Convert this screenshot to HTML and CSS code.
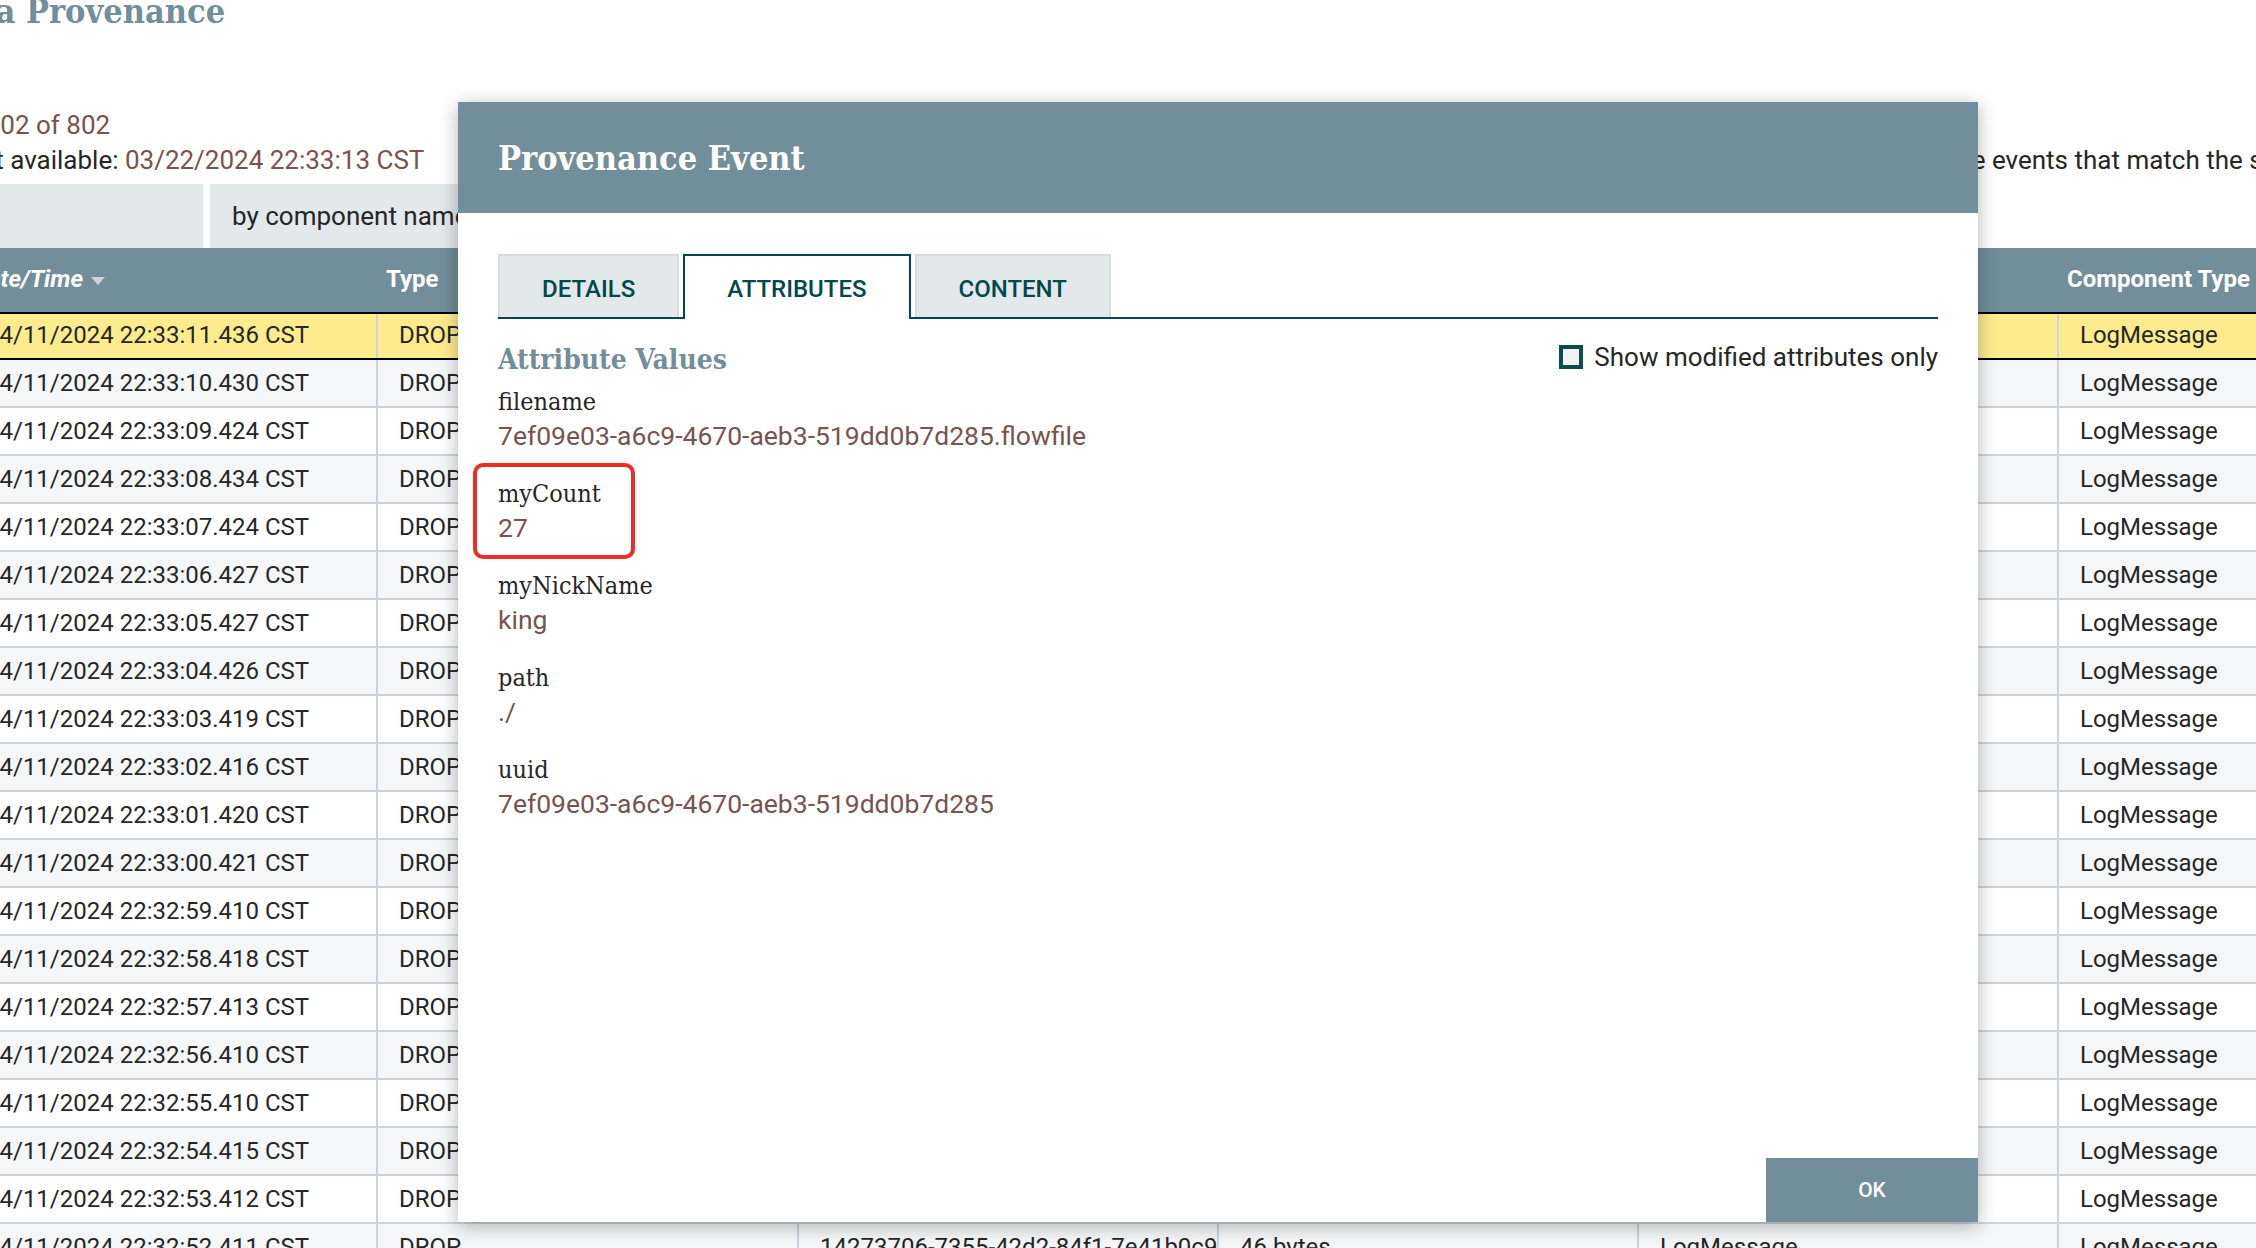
FILE: index.html
```html
<!DOCTYPE html>
<html lang="en">
<head>
    <meta charset="UTF-8">
    <meta name="viewport" content="width=device-width, initial-scale=1.0">
    <title>Data Provenance</title>
    <link rel="stylesheet" href="styles.css">
</head>
<body>
    <div class="provenance-page">
        <h1 class="page-title">Data Provenance</h1>

        <div class="summary">
            <div class="summary-left">
                <div class="value">Displaying 802 of 802</div>
                <div>Oldest event available: <span class="value">03/22/2024 22:33:13 CST</span></div>
            </div>
            <div class="summary-note">Showing the events that match the search criteria.</div>
        </div>

        <div class="search-bar">
            <div class="search-box"></div>
            <div class="search-box filter">by component name</div>
        </div>

        <div class="grid">
            <div class="grid-header">
                <div class="col col-date sorted">Date/Time
                    <svg class="sort-arrow" width="14" height="8" viewBox="0 0 14 8"><path d="M0 0h14L7 8z"/></svg>
                </div>
                <div class="col col-type">Type</div>
                <div class="col">FlowFile Uuid</div>
                <div class="col">Size</div>
                <div class="col">Component Name</div>
                <div class="col col-comp">Component Type</div>
            </div>

            <div class="grid-body">
                <div class="grid-row selected">
                    <div class="col col-date">04/11/2024 22:33:11.436 CST</div>
                    <div class="col col-type">DROP</div>
                    <div class="col">7ef09e03-a6c9-4670-aeb3-519dd0b7d285</div>
                    <div class="col">46 bytes</div>
                    <div class="col">LogMessage</div>
                    <div class="col col-comp">LogMessage</div>
                </div>
                <div class="grid-row">
                    <div class="col col-date">04/11/2024 22:33:10.430 CST</div>
                    <div class="col col-type">DROP</div>
                    <div class="col">c1a52e07-9d1b-4f62-b0a4-2e8c71d5f903</div>
                    <div class="col">46 bytes</div>
                    <div class="col">LogMessage</div>
                    <div class="col col-comp">LogMessage</div>
                </div>
                <div class="grid-row">
                    <div class="col col-date">04/11/2024 22:33:09.424 CST</div>
                    <div class="col col-type">DROP</div>
                    <div class="col">5b83f2d4-0e77-41c9-9a36-d40f1e6b8a25</div>
                    <div class="col">46 bytes</div>
                    <div class="col">LogMessage</div>
                    <div class="col col-comp">LogMessage</div>
                </div>
                <div class="grid-row">
                    <div class="col col-date">04/11/2024 22:33:08.434 CST</div>
                    <div class="col col-type">DROP</div>
                    <div class="col">e2d9a4b1-6c30-4f85-8e1b-73a9c05d2f64</div>
                    <div class="col">46 bytes</div>
                    <div class="col">LogMessage</div>
                    <div class="col col-comp">LogMessage</div>
                </div>
                <div class="grid-row">
                    <div class="col col-date">04/11/2024 22:33:07.424 CST</div>
                    <div class="col col-type">DROP</div>
                    <div class="col">90f3c6a8-2b54-4d1e-a7f0-1c6e8b3d4a92</div>
                    <div class="col">46 bytes</div>
                    <div class="col">LogMessage</div>
                    <div class="col col-comp">LogMessage</div>
                </div>
                <div class="grid-row">
                    <div class="col col-date">04/11/2024 22:33:06.427 CST</div>
                    <div class="col col-type">DROP</div>
                    <div class="col">3d7e1b90-f4a2-4c68-95d3-8a2f6e0c7b15</div>
                    <div class="col">46 bytes</div>
                    <div class="col">LogMessage</div>
                    <div class="col col-comp">LogMessage</div>
                </div>
                <div class="grid-row">
                    <div class="col col-date">04/11/2024 22:33:05.427 CST</div>
                    <div class="col col-type">DROP</div>
                    <div class="col">a6c04f2e-81d9-47b3-b2e5-05d7a9f1c368</div>
                    <div class="col">46 bytes</div>
                    <div class="col">LogMessage</div>
                    <div class="col col-comp">LogMessage</div>
                </div>
                <div class="grid-row">
                    <div class="col col-date">04/11/2024 22:33:04.426 CST</div>
                    <div class="col col-type">DROP</div>
                    <div class="col">f81b2d6c-3e09-4a74-8c1f-6b4e2d90a7c3</div>
                    <div class="col">46 bytes</div>
                    <div class="col">LogMessage</div>
                    <div class="col col-comp">LogMessage</div>
                </div>
                <div class="grid-row">
                    <div class="col col-date">04/11/2024 22:33:03.419 CST</div>
                    <div class="col col-type">DROP</div>
                    <div class="col">2c95e7a0-b6d1-4f38-a04e-d3c18f5b9e26</div>
                    <div class="col">46 bytes</div>
                    <div class="col">LogMessage</div>
                    <div class="col col-comp">LogMessage</div>
                </div>
                <div class="grid-row">
                    <div class="col col-date">04/11/2024 22:33:02.416 CST</div>
                    <div class="col col-type">DROP</div>
                    <div class="col">6e4a1f83-07c2-4b9d-8e65-a91d3c7f0b48</div>
                    <div class="col">46 bytes</div>
                    <div class="col">LogMessage</div>
                    <div class="col col-comp">LogMessage</div>
                </div>
                <div class="grid-row">
                    <div class="col col-date">04/11/2024 22:33:01.420 CST</div>
                    <div class="col col-type">DROP</div>
                    <div class="col">b3f09d25-5a8e-4c17-9f2b-e76a04c1d839</div>
                    <div class="col">46 bytes</div>
                    <div class="col">LogMessage</div>
                    <div class="col col-comp">LogMessage</div>
                </div>
                <div class="grid-row">
                    <div class="col col-date">04/11/2024 22:33:00.421 CST</div>
                    <div class="col col-type">DROP</div>
                    <div class="col">0d72c8e4-9f13-4a56-b8d0-3e5f1a7c92b6</div>
                    <div class="col">46 bytes</div>
                    <div class="col">LogMessage</div>
                    <div class="col col-comp">LogMessage</div>
                </div>
                <div class="grid-row">
                    <div class="col col-date">04/11/2024 22:32:59.410 CST</div>
                    <div class="col col-type">DROP</div>
                    <div class="col">8a1e5b37-c2f4-4d90-a6b3-f49d02e8c517</div>
                    <div class="col">46 bytes</div>
                    <div class="col">LogMessage</div>
                    <div class="col col-comp">LogMessage</div>
                </div>
                <div class="grid-row">
                    <div class="col col-date">04/11/2024 22:32:58.418 CST</div>
                    <div class="col col-type">DROP</div>
                    <div class="col">47d6f0a9-1b8c-4e23-9c75-5a0e3b6d8f14</div>
                    <div class="col">46 bytes</div>
                    <div class="col">LogMessage</div>
                    <div class="col col-comp">LogMessage</div>
                </div>
                <div class="grid-row">
                    <div class="col col-date">04/11/2024 22:32:57.413 CST</div>
                    <div class="col col-type">DROP</div>
                    <div class="col">d5b2a8c6-e0f7-4916-83a4-b1c7f9e2d056</div>
                    <div class="col">46 bytes</div>
                    <div class="col">LogMessage</div>
                    <div class="col col-comp">LogMessage</div>
                </div>
                <div class="grid-row">
                    <div class="col col-date">04/11/2024 22:32:56.410 CST</div>
                    <div class="col col-type">DROP</div>
                    <div class="col">19e4c7f2-3a6d-4b05-a8e1-c0d5b2f7e493</div>
                    <div class="col">46 bytes</div>
                    <div class="col">LogMessage</div>
                    <div class="col col-comp">LogMessage</div>
                </div>
                <div class="grid-row">
                    <div class="col col-date">04/11/2024 22:32:55.410 CST</div>
                    <div class="col col-type">DROP</div>
                    <div class="col">c80f3a5d-6b92-4e1c-b7d4-2f8e0a9c6b31</div>
                    <div class="col">46 bytes</div>
                    <div class="col">LogMessage</div>
                    <div class="col col-comp">LogMessage</div>
                </div>
                <div class="grid-row">
                    <div class="col col-date">04/11/2024 22:32:54.415 CST</div>
                    <div class="col col-type">DROP</div>
                    <div class="col">5f27b1e9-d4c0-4a83-96f5-e3a6c8d1b072</div>
                    <div class="col">46 bytes</div>
                    <div class="col">LogMessage</div>
                    <div class="col col-comp">LogMessage</div>
                </div>
                <div class="grid-row">
                    <div class="col col-date">04/11/2024 22:32:53.412 CST</div>
                    <div class="col col-type">DROP</div>
                    <div class="col">e6a93d04-7c1b-4f52-8d2e-90b4f5a7c1d8</div>
                    <div class="col">46 bytes</div>
                    <div class="col">LogMessage</div>
                    <div class="col col-comp">LogMessage</div>
                </div>
                <div class="grid-row">
                    <div class="col col-date">04/11/2024 22:32:52.411 CST</div>
                    <div class="col col-type">DROP</div>
                    <div class="col">14273706-7355-42d2-84f1-7e41b0c9a3d5</div>
                    <div class="col">46 bytes</div>
                    <div class="col">LogMessage</div>
                    <div class="col col-comp">LogMessage</div>
                </div>
            </div>
        </div>
    </div>

    <div class="dialog">
        <div class="dialog-header">Provenance Event</div>
        <div class="dialog-body">
            <div class="tabs">
                <div class="tab">Details</div>
                <div class="tab active">Attributes</div>
                <div class="tab">Content</div>
            </div>

            <div class="attr-head">
                <h3 class="attr-title">Attribute Values</h3>
                <label class="modified-toggle"><span class="checkbox"></span>Show modified attributes only</label>
            </div>

            <div class="attr-list">
                <div class="attr">
                    <div class="attr-name">filename</div>
                    <div class="attr-value">7ef09e03-a6c9-4670-aeb3-519dd0b7d285.flowfile</div>
                </div>
                <div class="attr marked">
                    <div class="attr-name">myCount</div>
                    <div class="attr-value">27</div>
                </div>
                <div class="attr">
                    <div class="attr-name">myNickName</div>
                    <div class="attr-value">king</div>
                </div>
                <div class="attr">
                    <div class="attr-name">path</div>
                    <div class="attr-value">./</div>
                </div>
                <div class="attr">
                    <div class="attr-name">uuid</div>
                    <div class="attr-value">7ef09e03-a6c9-4670-aeb3-519dd0b7d285</div>
                </div>
            </div>
        </div>
        <div class="dialog-footer">
            <button class="ok-btn">OK</button>
        </div>
    </div>
</body>
</html>
```

FILE: styles.css
```css
* {
    box-sizing: border-box;
}
html, body {
    margin: 0;
}
body {
    position: relative;
    width: 2256px;
    height: 1248px;
    overflow: hidden;
    background-color: #fff;
    color: #262626;
    font-family: Roboto, "Liberation Sans", sans-serif;
    font-size: 26px;
}

/* page behind the dialog, scrolled a little to the right */
.provenance-page {
    margin-left: -140px;
    width: 2700px;
}
.page-title {
    margin: -9px 0 0 75px;
    font-family: "DejaVu Serif Condensed", "DejaVu Serif", serif;
    font-stretch: semi-condensed;
    font-size: 34px;
    line-height: 40px;
    font-weight: bold;
    color: #728e9b;
}
.summary {
    display: grid;
    grid-template-columns: 1983px auto;
    align-items: end;
    margin-top: 77px;
    line-height: 35px;
    white-space: nowrap;
}
.value {
    color: #775351;
}
.search-bar {
    display: flex;
    gap: 7px;
    height: 64px;
    margin: 6px 0 0 105px;
}
.search-box {
    width: 238px;
    background-color: #e3e8eb;
}
.search-box.filter {
    width: 1000px;
    padding-left: 22px;
    line-height: 64px;
}

.grid {
    margin-left: 105px;
    font-size: 24px;
}
.grid-header,
.grid-row {
    display: flex;
}
.grid-header {
    height: 64px;
    line-height: 62px;
    background-color: #728e9b;
    color: #fff;
    font-weight: bold;
}
.col {
    flex: 0 0 420px;
    white-space: nowrap;
    overflow: hidden;
}
.col-date {
    flex-basis: 413px;
}
.col-type {
    flex-basis: 421px;
}
.col-comp {
    flex-basis: 320px;
}
.grid-header .col {
    padding-left: 8px;
}
.grid-header .sorted {
    font-style: italic;
}
.sort-arrow {
    margin-left: 2px;
    fill: #c9d5db;
    vertical-align: middle;
}
.grid-row {
    height: 48px;
    border-bottom: 2px solid #cbd5da;
}
.grid-row:nth-child(even) {
    background-color: #f4f6f7;
}
.grid-row .col {
    padding: 3px 0 0 21px;
    line-height: 40px;
    border-right: 2px solid #cbd5da;
}
.grid-row.selected {
    background-color: #fdec8d;
    border-top: 2px solid #000;
    border-bottom-color: #000;
}
.grid-row.selected .col {
    padding-top: 1px;
}

/* provenance event dialog */
.dialog {
    position: absolute;
    left: 458px;
    top: 102px;
    width: 1520px;
    height: 1120px;
    display: flex;
    flex-direction: column;
    background-color: #fff;
    box-shadow: 0 4px 18px rgba(0, 0, 0, 0.3);
}
.dialog-header {
    height: 111px;
    padding: 2px 40px 0;
    line-height: 109px;
    background-color: #728e9b;
    color: #fff;
    font-family: "DejaVu Serif Condensed", "DejaVu Serif", serif;
    font-stretch: semi-condensed;
    font-size: 34px;
    font-weight: bold;
}
.dialog-body {
    flex: 1;
    padding: 41px 40px 0;
}
.tabs {
    display: flex;
    gap: 4px;
    height: 65px;
    border-bottom: 2px solid #004849;
}
.tab {
    height: 63px;
    padding: 5px 42px 0;
    line-height: 56px;
    background-color: #e3e8eb;
    border: 2px solid #d3dde2;
    border-bottom: none;
    color: #004849;
    font-size: 24px;
    font-weight: 500;
    text-transform: uppercase;
}
.tab.active {
    height: 65px;
    background-color: #fff;
    border-color: #004849;
}
.attr-head {
    display: flex;
    justify-content: space-between;
    align-items: baseline;
    margin-top: 20px;
    height: 36px;
}
.attr-title {
    margin: 0;
    font-family: "DejaVu Serif Condensed", "DejaVu Serif", serif;
    font-stretch: semi-condensed;
    font-size: 28px;
    line-height: 36px;
    font-weight: bold;
    color: #728e9b;
}
.modified-toggle {
    display: flex;
    align-items: center;
    line-height: 36px;
}
.checkbox {
    width: 24px;
    height: 24px;
    margin-right: 11px;
    border: 4px solid #0e4b4c;
    background-color: #eef3f3;
}
.attr-list {
    display: flex;
    flex-direction: column;
    gap: 24px;
    margin-top: 10px;
}
.attr {
    line-height: 34px;
}
.attr-name {
    font-family: "DejaVu Serif Condensed", "DejaVu Serif", serif;
    font-stretch: semi-condensed;
    font-size: 25px;
}
.attr-value {
    color: #775351;
    font-size: 26.5px;
}
.attr.marked {
    position: relative;
}
.attr.marked::after {
    content: "";
    position: absolute;
    left: -25px;
    top: -14px;
    width: 154px;
    height: 88px;
    border: 4px solid #ee2d25;
    border-radius: 10px;
}
.dialog-footer {
    display: flex;
    justify-content: flex-end;
}
.ok-btn {
    width: 212px;
    height: 64px;
    border: none;
    background-color: #728e9b;
    color: #fff;
    font-family: Roboto, "Liberation Sans", sans-serif;
    font-size: 21px;
    font-weight: 500;
    cursor: pointer;
}
```
